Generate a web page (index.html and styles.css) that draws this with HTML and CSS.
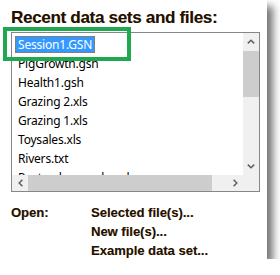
FILE: index.html
```html
<!DOCTYPE html>
<html>
<head>
<meta charset="utf-8">
<link rel="stylesheet" href="styles.css">
</head>
<body>
<div class="panel">
  <h1 class="title">Recent data sets and files:</h1>
  <div class="listbox">
    <ul class="items">
      <li><span class="sel">Session1.GSN</span></li>
      <li><span>PigGrowth.gsh</span></li>
      <li><span>Health1.gsh</span></li>
      <li><span>Grazing 2.xls</span></li>
      <li><span>Grazing 1.xls</span></li>
      <li><span>Toysales.xls</span></li>
      <li><span>Rivers.txt</span></li>
      <li><span>Postcode sample.gsh</span></li>
    </ul>
    <div class="vscroll">
      <div class="vbtn"><svg width="8" height="5" viewBox="0 0 8 5"><path d="M0.8 4.4 L4 1.2 L7.2 4.4" fill="none" stroke="#606060" stroke-width="1.5"/></svg></div>
      <div class="vtrack"><div class="vthumb"></div></div>
      <div class="vbtn"><svg width="8" height="5" viewBox="0 0 8 5"><path d="M0.8 0.6 L4 3.8 L7.2 0.6" fill="none" stroke="#606060" stroke-width="1.5"/></svg></div>
    </div>
    <div class="hscroll">
      <div class="hbtn"><svg width="5" height="8" viewBox="0 0 5 8"><path d="M4.4 0.8 L1.2 4 L4.4 7.2" fill="none" stroke="#606060" stroke-width="1.5"/></svg></div>
      <div class="htrack"><div class="hthumb" style="width:184px"></div></div>
      <div class="hbtn"><svg width="5" height="8" viewBox="0 0 5 8"><path d="M0.6 0.8 L3.8 4 L0.6 7.2" fill="none" stroke="#606060" stroke-width="1.5"/></svg></div>
    </div>
    <div class="corner"></div>
  </div>
  <div class="open">
    <div class="open-label">Open:</div>
    <div class="open-links">
      <div>Selected file(s)...</div>
      <div>New file(s)...</div>
      <div>Example data set...</div>
    </div>
  </div>
  <div class="focus-mark"></div>
</div>
</body>
</html>
```

FILE: styles.css
```css
html, body {
  margin: 0;
  padding: 0;
  background: #ffffff;
}

.panel {
  position: relative;
  width: 267px;
  height: 259px;
  background: #ffffff;
  box-shadow: 6px 6px 8px rgba(0, 0, 0, 0.55);
}

.title {
  margin: 0;
  box-sizing: border-box;
  height: 32px;
  padding: 8px 0 0 11px;
  font: bold 17px/20px "Liberation Sans", Arial, sans-serif;
  letter-spacing: -0.3px;
  color: #221100;
  text-shadow: 0.4px 0.4px 0 rgba(130, 70, 0, 0.45);
}

.listbox {
  margin-left: 11px;
  width: 249px;
  height: 160px;
  box-sizing: border-box;
  border: 1px solid #828790;
  display: grid;
  grid-template-columns: 1fr 16px;
  grid-template-rows: 1fr 16px;
  background: #ffffff;
}

.items {
  margin: 0;
  padding: 2px 0 0 3px;
  list-style: none;
  overflow: hidden;
  font: 12px "Noto Sans", "Open Sans", sans-serif;
  letter-spacing: -0.2px;
  color: #000000;
}

.items li {
  height: 19px;
  white-space: nowrap;
}

.items span {
  display: inline-block;
  margin-top: 1px;
  padding: 0 2px;
  line-height: 15px;
  border: 1px solid transparent;
}

.items span.sel {
  background: #3399ff;
  color: #ffffff;
  border: 1px dotted #cc6600;
}

.vscroll {
  display: flex;
  flex-direction: column;
  background: #f0f0f0;
}

.vbtn {
  height: 17px;
  display: flex;
  align-items: center;
  justify-content: center;
}

.vtrack {
  flex: 1;
}

.vthumb {
  margin-top: 1px;
  height: 46px;
  background: #cdcdcd;
}

.hscroll {
  display: flex;
  background: #f0f0f0;
}

.hbtn {
  width: 16px;
  display: flex;
  align-items: center;
  justify-content: center;
}

.htrack {
  flex: 1;
}

.hthumb {
  height: 100%;
  background: #cdcdcd;
}

.corner {
  background: #f0f0f0;
}

.open {
  display: flex;
  margin-top: 11px;
  padding-left: 11px;
  font: bold 13px/19px "Liberation Sans", Arial, sans-serif;
  color: #221100;
  text-shadow: 0.4px 0.4px 0 rgba(130, 70, 0, 0.45);
}

.open-label {
  width: 80px;
}

.focus-mark {
  position: absolute;
  left: 3px;
  top: 27px;
  width: 128px;
  height: 34px;
  box-sizing: border-box;
  border: 4px solid #1fa84f;
}
```
